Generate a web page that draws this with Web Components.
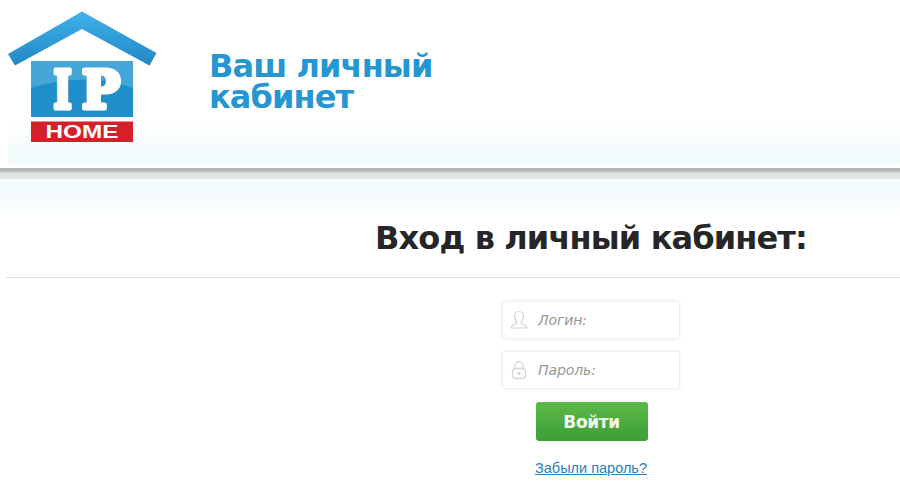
<!DOCTYPE html>
<html lang="ru">
<head>
<meta charset="utf-8">
<title>Вход в личный кабинет</title>
<style>
  html, body { margin: 0; height: 100%; background: #fff; overflow: hidden; }
  body { font-family: "DejaVu Sans", sans-serif; }
</style>
</head>
<body>
<template id="logo-tpl">
  <style>
    :host { display: block; width: 150px; height: 144px; }
    svg { display: block; }
    .ip { font: 700 53px "DejaVu Serif", serif; fill: #fff; stroke: #fff; stroke-width: 5px; stroke-linejoin: round; }
  </style>
  <svg width="150" height="144" viewBox="0 0 150 144" xmlns="http://www.w3.org/2000/svg">
    <defs>
      <linearGradient id="roof" x1="0" y1="0" x2="0" y2="1">
        <stop offset="0" stop-color="#3fb1ea"/>
        <stop offset="1" stop-color="#2288c4"/>
      </linearGradient>
    </defs>
    <path d="M74 11.500 L148.500 53 L141.500 65.500 L74 29 L7 65.500 L0 54 Z" fill="url(#roof)"/>
    <rect x="23" y="61" width="102" height="56" fill="#1f8fc9"/>
    <path d="M23 61 H125 V88 C100 78 60 76 23 88 Z" fill="#45a6d8"/>
    <text class="ip" x="54.500" y="108" text-anchor="middle" textLength="18" lengthAdjust="spacingAndGlyphs">I</text>
    <text class="ip" x="93" y="108" text-anchor="middle" textLength="38" lengthAdjust="spacingAndGlyphs">P</text>
    <rect x="23" y="121.500" width="102" height="20.500" fill="#d4202a"/>
    <text x="74" y="138" text-anchor="middle" font-family="'Liberation Sans', sans-serif" font-weight="700" font-size="18" textLength="73" lengthAdjust="spacingAndGlyphs" fill="#fff">HOME</text>
  </svg>
</template>

<template id="header-tpl">
  <style>
    :host { display: block; }
    .bar {
      margin-left: 8px;
      height: 168px;
      box-sizing: border-box;
      display: flex;
      gap: 51px;
      background: linear-gradient(to bottom, #fff 0, #fff 122px, #f0f9fb 162px, #fafdfe 163px, #fff 168px);
    }
    h1 {
      margin: 51px 0 0;
      font: 700 32px/31px "DejaVu Sans", sans-serif;
      letter-spacing: -0.9px;
      color: #2596cf;
    }
    .stripe {
      height: 13px;
      background: linear-gradient(to bottom, #aeb3b2 0, #b4b8b7 3px, #dee2e2 5px, #e0e4e4 10px, #fafcfc 12px, #fff 13px);
    }
    .glow {
      height: 38px;
      background: linear-gradient(to bottom, #f2fafc 0, #f7fcfd 50%, #fff 100%);
    }
  </style>
  <div class="bar">
    <slot name="logo"></slot>
    <h1><slot></slot></h1>
  </div>
  <div class="stripe"></div>
  <div class="glow"></div>
</template>

<template id="field-tpl">
  <style>
    :host {
      display: flex;
      align-items: center;
      box-sizing: border-box;
      width: 178px;
      height: 38px;
      padding: 0 0 1px 7px;
      gap: 10px;
      background: #fff;
      border: 1px solid #efefef;
      border-radius: 3px;
      box-shadow: 0 0 4px #eeeeee;
      color: #969696;
      font: italic 14px "DejaVu Sans", sans-serif;
      letter-spacing: -0.1px;
    }
    ::slotted(svg) { flex: none; display: block; }
  </style>
  <slot name="icon"></slot>
  <slot></slot>
</template>

<template id="login-tpl">
  <style>
    :host { display: block; }
    h2 {
      margin: 0 0 0 375px;
      font: 700 32px/38px "DejaVu Sans", sans-serif;
      letter-spacing: -0.87px;
      color: #262626;
      white-space: nowrap;
    }
    hr {
      margin: 20px 0 0 6px;
      height: 1px;
      border: 0;
      background: #dcdcdc;
    }
    form {
      margin: 23px 0 0 502px;
      width: 178px;
      display: flex;
      flex-direction: column;
      gap: 12px;
    }
    button {
      align-self: center;
      width: 112px;
      height: 39px;
      margin: 1px 0 0 1px;
      border: 0;
      border-radius: 3px;
      background: linear-gradient(to bottom, #5cb94b, #3f9f35);
      color: #f2faee;
      font: 700 17px "DejaVu Sans", sans-serif;
      letter-spacing: -0.4px;
    }
    a {
      align-self: center;
      margin-top: 7px;
      color: #2a7fb8;
      font: 14.500px "Liberation Sans", sans-serif;
      text-decoration: underline;
    }
  </style>
  <h2><slot name="title"></slot></h2>
  <hr>
  <form>
    <slot></slot>
    <button type="button">Войти</button>
    <a href="#">Забыли пароль?</a>
  </form>
</template>

<ip-header>
  <ip-logo slot="logo"></ip-logo>
  Ваш личный<br>кабинет
</ip-header>
<ip-login>
  <span slot="title">Вход в личный кабинет:</span>
  <ip-field>
    <svg slot="icon" width="18" height="20" viewBox="0 0 18 20" fill="none" stroke="#d4d7d7" stroke-width="1.200">
      <path d="M9 1.500c-3 0-4.500 2.200-4.500 5 0 2.300.8 4 2 5.200v1.800c-1.500 1-5 1.200-5.500 4.500h16c-.5-3.300-4-3.500-5.500-4.500v-1.800c1.200-1.200 2-2.900 2-5.200 0-2.800-1.500-5-4.500-5z"/>
    </svg>
    Логин:
  </ip-field>
  <ip-field>
    <svg slot="icon" width="18" height="20" viewBox="0 0 18 20" fill="none" stroke="#d4d7d7" stroke-width="1.300">
      <path d="M5 9V5.500a4 4 0 0 1 8 0V9"/>
      <rect x="2.500" y="8.500" width="13" height="10" rx="3"/>
      <circle cx="9" cy="13.500" r="1" fill="#d4d7d7"/>
    </svg>
    Пароль:
  </ip-field>
</ip-login>

<script>
  // every element just clones its template into an open shadow root
  function register(tag, tplId) {
    customElements.define(tag, class extends HTMLElement {
      constructor() {
        super();
        this.attachShadow({ mode: 'open' });
        this.shadowRoot.appendChild(document.getElementById(tplId).content.cloneNode(true));
      }
    });
  }
  register('ip-logo', 'logo-tpl');
  register('ip-header', 'header-tpl');
  register('ip-field', 'field-tpl');
  register('ip-login', 'login-tpl');
</script>
</body>
</html>
